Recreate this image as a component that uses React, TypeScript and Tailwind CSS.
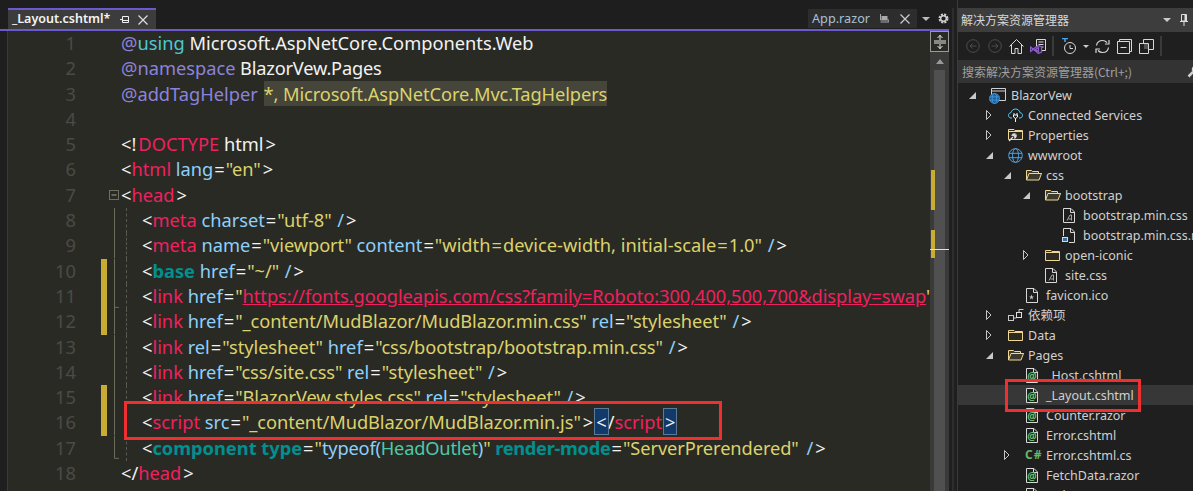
import type { ReactNode } from "react";

const pink = "text-[#f0205f]";
const blue = "text-[#8dd0fb]";
const yel = "text-[#dcd26c]";
const teal = "font-bold text-[#00908f]";
const wht = "text-[#f2f2f2]";
const pur = "text-[#8a83dc]";
const brace = "bg-[#113a6b] text-[#f2f2f2] outline outline-[#5a7a99] px-[1px]";

function C({ c, children }: { c: string; children: ReactNode }) {
  return <span className={c}>{children}</span>;
}

// the reference font draws =, > and /> wider than Noto Sans does
const Eq = () => <span className={`${wht} px-[1px]`}>=</span>;
const Gt = () => <span className={`${wht} pl-[2px]`}>&gt;</span>;
const Close = () => (
  <>
    <span className={`${blue} pl-[1px]`}> /</span>
    <Gt />
  </>
);
const Lt = ({ tag }: { tag: string }) => (
  <>
    <C c={wht}>&lt;</C>
    <C c={pink}>{tag}</C>
  </>
);
const Attr = ({ name }: { name: string }) => (
  <>
    <C c={blue}> {name}</C>
    <Eq />
  </>
);
const Str = ({ v }: { v: string }) => <span className={`${yel} tracking-[-0.08px]`}>{v}</span>;

type Fold = "box" | "line" | "end" | "tick";

const lines: { n: number; mark?: boolean; indent?: boolean; fold?: Fold; body: ReactNode }[] = [
  {
    n: 1,
    body: (
      <>
        <C c={pur}>@</C>
        <C c="text-[#4cc8d2]">using</C>
        <C c={wht}> Microsoft.AspNetCore.Components.Web</C>
      </>
    ),
  },
  {
    n: 2,
    body: (
      <>
        <C c={pur}>@namespace</C>
        <span className={`${wht} tracking-[-0.2px]`}> BlazorVew.Pages</span>
      </>
    ),
  },
  {
    n: 3,
    body: (
      <>
        <C c={pur}>@addTagHelper </C>
        <span className="bg-[#45453a] text-[#dcd26c] tracking-[-0.1px] ml-[1px]">*, Microsoft.AspNetCore.Mvc.TagHelpers</span>
      </>
    ),
  },
  { n: 4, body: <>&nbsp;</> },
  {
    n: 5,
    body: (
      <>
        <span className={`${wht} pr-[2px]`}>&lt;!</span>
        <C c={pink}>DOCTYPE</C>
        <C c={wht}> html</C>
        <Gt />
      </>
    ),
  },
  {
    n: 6,
    body: (
      <>
        <Lt tag="html" />
        <Attr name="lang" />
        <Str v={'"en"'} />
        <Gt />
      </>
    ),
  },
  {
    n: 7,
    fold: "box",
    body: (
      <>
        <Lt tag="head" />
        <Gt />
      </>
    ),
  },
  {
    n: 8,
    indent: true,
    fold: "line",
    body: (
      <>
        <Lt tag="meta" />
        <Attr name="charset" />
        <Str v={'"utf-8"'} />
        <Close />
      </>
    ),
  },
  {
    n: 9,
    indent: true,
    fold: "line",
    body: (
      <>
        <Lt tag="meta" />
        <Attr name="name" />
        <Str v={'"viewport"'} />
        <Attr name="content" />
        <C c={yel}>
          "width<span className="px-[1px]">=</span>device-width, initial-scale<span className="px-[1px]">=</span>1.0"
        </C>
        <Close />
      </>
    ),
  },
  {
    n: 10,
    mark: true,
    indent: true,
    fold: "line",
    body: (
      <>
        <C c={wht}>&lt;</C>
        <C c={teal}>base</C>
        <Attr name="href" />
        <Str v={'"~/"'} />
        <Close />
      </>
    ),
  },
  {
    n: 11,
    mark: true,
    indent: true,
    fold: "tick",
    body: (
      <>
        <Lt tag="link" />
        <Attr name="href" />
        <C c={yel}>"</C>
        <span className={`${pink} underline tracking-[-0.05px]`}>https://fonts.googleapis.com/css?family=Roboto:300,400,500,700&amp;display=swap</span>
        <C c={yel}>"</C>
      </>
    ),
  },
  {
    n: 12,
    mark: true,
    indent: true,
    fold: "line",
    body: (
      <>
        <Lt tag="link" />
        <Attr name="href" />
        <Str v={'"_content/MudBlazor/MudBlazor.min.css"'} />
        <Attr name="rel" />
        <Str v={'"stylesheet"'} />
        <Close />
      </>
    ),
  },
  {
    n: 13,
    indent: true,
    fold: "line",
    body: (
      <>
        <Lt tag="link" />
        <Attr name="rel" />
        <Str v={'"stylesheet"'} />
        <Attr name="href" />
        <Str v={'"css/bootstrap/bootstrap.min.css"'} />
        <Close />
      </>
    ),
  },
  {
    n: 14,
    indent: true,
    fold: "line",
    body: (
      <>
        <Lt tag="link" />
        <Attr name="href" />
        <Str v={'"css/site.css"'} />
        <Attr name="rel" />
        <Str v={'"stylesheet"'} />
        <Close />
      </>
    ),
  },
  {
    n: 15,
    mark: true,
    indent: true,
    fold: "line",
    body: (
      <>
        <Lt tag="link" />
        <Attr name="href" />
        <Str v={'"BlazorVew.styles.css"'} />
        <Attr name="rel" />
        <Str v={'"stylesheet"'} />
        <Close />
      </>
    ),
  },
  {
    n: 16,
    mark: true,
    indent: true,
    fold: "line",
    body: (
      <>
        <Lt tag="script" />
        <Attr name="src" />
        <Str v={'"_content/MudBlazor/MudBlazor.min.js"'} />
        <Gt />
        <span className={`${brace} ml-[2px]`}>&lt;</span>
        <C c={wht}>/</C>
        <C c={pink}>script</C>
        <span className={`${brace} ml-[2px]`}>&gt;</span>
      </>
    ),
  },
  {
    n: 17,
    indent: true,
    fold: "end",
    body: (
      <>
        <C c={wht}>&lt;</C>
        <C c={teal}>component type</C>
        <Eq />
        <C c={yel}>"</C>
        <span className={`${blue} tracking-[-0.2px]`}>typeof(</span>
        <span className="text-[#4ec9a8] tracking-[-0.2px]">HeadOutlet</span>
        <C c={blue}>)</C>
        <C c={yel}>"</C>
        <span className={`${teal} tracking-[-0.3px]`}> render-mode</span>
        <Eq />
        <Str v={'"ServerPrerendered"'} />
        <span className="pl-[2px]" />
        <Close />
      </>
    ),
  },
  {
    n: 18,
    body: (
      <>
        <C c={wht}>&lt;/</C>
        <C c={pink}>head</C>
        <Gt />
      </>
    ),
  },
];

function FoldCell({ fold }: { fold?: Fold }) {
  if (fold === "box") {
    return (
      <div className="w-[12px] h-full flex items-center">
        <svg width="10" height="10" viewBox="0 0 10 10">
          <rect x="0.5" y="0.5" width="9" height="9" fill="none" stroke="#6f6f60" />
          <path d="M2.5 5H7.5" stroke="#a0a090" />
        </svg>
      </div>
    );
  }
  if (!fold) return <div className="w-[12px] h-full" />;
  return (
    <svg width="12" height="26" viewBox="0 0 12 26" className="w-[12px] h-full">
      <path d={fold === "end" ? "M5.5 0V23" : "M5.5 0V26"} stroke="#6f6f60" />
      {fold === "end" && <path d="M5.5 23H10" stroke="#6f6f60" />}
      {fold === "tick" && <path d="M5.5 24H10" stroke="#6f6f60" />}
    </svg>
  );
}

function Editor() {
  return (
    <div className="relative flex-1 min-w-0 overflow-hidden bg-[#2a2a25] border-l border-[#3a3a3a] text-[18.25px] font-['Noto_Sans','Open_Sans',sans-serif]">
      {lines.map((l) => (
        <div key={l.n} className="flex h-[25.3px] leading-[23.5px] whitespace-pre">
          <div className="w-[69px] pr-[1px] text-right text-[#4b4b44] shrink-0">{l.n}</div>
          <div className="w-[24px] shrink-0" />
          <div className={`w-[6px] h-full shrink-0 ${l.mark ? "bg-[#c9ac34]" : ""}`} />
          <div className="ml-[2px] shrink-0">
            <FoldCell fold={l.fold} />
          </div>
          {l.indent ? (
            <div className="ml-[5px] pl-[15px] border-l border-dashed border-[#5a5a52]">{l.body}</div>
          ) : (
            <div>{l.body}</div>
          )}
        </div>
      ))}
    </div>
  );
}

function ScrollRail() {
  return (
    <div className="w-[19px] shrink-0 flex flex-col bg-[#3a3a38] items-center">
      <div className="w-full h-[21px] border border-[#9a9a9a] bg-[#2a2a25] flex items-center justify-center">
        <svg width="12" height="14" viewBox="0 0 12 14">
          <path d="M0 6H12M0 8H12M6 0V5M6 9V14M3.5 3L6 0.5 8.5 3M3.5 11L6 13.5 8.5 11" stroke="#e4e4e4" fill="none" />
        </svg>
      </div>
      <div className="h-[18px] flex items-center">
        <div className="w-0 h-0 border-x-[4.5px] border-x-transparent border-b-[5px] border-b-[#999]" />
      </div>
      <div className="relative w-[11px] flex-1 bg-[#505050]">
        <div className="absolute left-[-3px] top-[100px] w-[4px] h-[40px] bg-[#c9ac34]" />
        <div className="absolute left-[-3px] top-[160px] w-[4px] h-[28px] bg-[#c9ac34]" />
        <div className="absolute left-[-4px] top-[179px] w-[19px] h-[1px] bg-[#e0e0e0]" />
      </div>
    </div>
  );
}

function Tabs() {
  return (
    <div className="h-[31px] flex pt-[8px] pl-[8px] border-b-[2px] border-[#6a5acd] bg-[#1e1e1e] items-stretch shrink-0 font-['Noto_Sans',sans-serif]">
      <div className="w-[148px] border-t-[2px] border-[#6a5acd] bg-[#3c3c3c] flex items-center pl-[4px] text-[#f4f4f4] text-[12.5px] font-semibold">
        _Layout.cshtml*
        <svg width="9" height="9" viewBox="0 0 9 9" className="ml-auto shrink-0">
          <path d="M0 4.5H2.5M2.5 1.5H8.5V7.5H2.5ZM2.5 5.5H8.5" stroke="#f0f0f0" fill="none" />
        </svg>
        <svg width="10" height="10" viewBox="0 0 10 10" className="ml-[9px] mr-[8px] shrink-0">
          <path d="M0.5 0.5L9.5 9.5M9.5 0.5L0.5 9.5" stroke="#ddd" strokeWidth="1.2" />
        </svg>
      </div>
      <div className="flex-1" />
      <div className="w-[109px] mt-[1px] mb-[1px] bg-[#2d2d2d] flex items-center pl-[4px] text-[#a9c0d6] text-[12.7px]">
        App.razor
        <svg width="10" height="9" viewBox="0 0 10 9" className="ml-auto shrink-0">
          <path d="M1.5 0V6H10V8H1.5" stroke="#aaa" fill="none" />
          <rect x="2.5" y="2" width="6" height="4" fill="#aaa" />
        </svg>
        <svg width="10" height="10" viewBox="0 0 10 10" className="ml-[11px] mr-[7px] shrink-0">
          <path d="M0.5 0.5L9.5 9.5M9.5 0.5L0.5 9.5" stroke="#ccc" strokeWidth="1.2" />
        </svg>
      </div>
      <div className="w-[32px] flex items-center">
        <div className="ml-[5px] w-0 h-0 border-x-[4px] border-x-transparent border-t-[4px] border-t-[#bbb]" />
        <svg width="11" height="11" viewBox="0 0 11 11" className="ml-[8px]">
          <circle cx="5.5" cy="5.5" r="3.8" fill="none" stroke="#ccc" strokeWidth="2.4" strokeDasharray="2 1" />
          <circle cx="5.5" cy="5.5" r="2.8" fill="none" stroke="#ccc" strokeWidth="1.4" />
        </svg>
      </div>
    </div>
  );
}

function Tri({ open }: { open?: boolean }) {
  if (open) {
    return (
      <svg width="7" height="7" viewBox="0 0 7 7">
        <path d="M7 0V7H0Z" fill="#c8c8c8" />
      </svg>
    );
  }
  return (
    <svg width="6" height="10" viewBox="0 0 6 10">
      <path d="M0.5 0.5L5 5 0.5 9.5Z" fill="none" stroke="#c8c8c8" />
    </svg>
  );
}

function FolderIcon({ open }: { open?: boolean }) {
  return open ? (
    <svg width="16" height="12" viewBox="0 0 16 12">
      <path d="M0.5 11V1.5H5.5L6.5 2.5H12.5V4.5H15.5L13 11Z" fill="#3c3a2c" stroke="#f0d795" />
      <path d="M0.5 11L3 4.5H15.5" fill="none" stroke="#f0d795" />
    </svg>
  ) : (
    <svg width="15" height="11" viewBox="0 0 15 11">
      <path d="M0.5 10.5V0.5H6L7 1.5H14.5V10.5Z" fill="#2e2c22" stroke="#f0d795" />
      <path d="M0.5 2.5H14.5" stroke="#f0d795" />
    </svg>
  );
}

function PageShell({ children }: { children?: ReactNode }) {
  return (
    <svg width="12" height="15" viewBox="0 0 12 15">
      <path d="M0.5 0.5H8L11.5 4V14.5H0.5Z" fill="#1f1f1f" stroke="#d8d8d8" />
      <path d="M7.5 0.5V4.5H11.5" fill="none" stroke="#d8d8d8" />
      {children}
    </svg>
  );
}

function CssIcon() {
  return (
    <PageShell>
      <path d="M4 12.5L7 7H8.5V12.5M5.5 11H8.5" fill="none" stroke="#a8a8a8" />
    </PageShell>
  );
}

function RazorIcon() {
  return (
    <span className="relative block w-[12px] h-[15px]">
      <PageShell />
      <span className="absolute left-0 top-[2px] w-[12px] text-center text-[10.5px] leading-[13px] font-bold text-[#6bc070]">@</span>
    </span>
  );
}

const GlobeSvg = ({ size = 15, fill = "none" }: { size?: number; fill?: string }) => (
  <svg width={size} height={size} viewBox="0 0 15 15" fill={fill} stroke="#4aa3e8">
    <circle cx="7.5" cy="7.5" r="6.8" />
    <ellipse cx="7.5" cy="7.5" rx="3" ry="6.8" />
    <path d="M1 5.3H14M1 9.7H14" />
  </svg>
);

type TreeRow = { x: string; tri?: "open" | "closed"; icon: ReactNode; label: string; sel?: boolean };

const rows: TreeRow[] = [
  {
    x: "pl-[33px]",
    tri: "open",
    label: "BlazorVew",
    icon: (
      <span className="relative block w-[17px] h-[16px] -ml-[2px]">
        <svg width="15" height="13" viewBox="0 0 15 13" className="absolute left-[2px] top-[1px]">
          <path d="M0.5 12.5V0.5H14.5V12.5ZM0.5 3H14.5" fill="none" stroke="#d0d0d0" />
        </svg>
        <span className="absolute left-0 top-[6px] flex">
          <GlobeSvg size={11} fill="#1e5f9e" />
        </span>
      </span>
    ),
  },
  {
    x: "pl-[50px]",
    tri: "closed",
    label: "Connected Services",
    icon: (
      <svg width="15" height="14" viewBox="0 0 15 14" fill="none" stroke="#5ccbe8">
        <path d="M4 10H3C1.5 10 0.5 8.7 0.5 7.3 0.5 5.8 1.7 4.7 3 4.7 3.5 2.5 5.3 1 7.5 1 9.7 1 11.5 2.5 12 4.7 13.3 4.7 14.5 5.8 14.5 7.3 14.5 8.7 13.5 10 12 10H11" />
        <path d="M6 5V7M9 5V7M5.5 7H9.5V9L7.5 10.5 5.5 9ZM7.5 10.5V14" stroke="#e8f8ff" />
      </svg>
    ),
  },
  {
    x: "pl-[50px]",
    tri: "closed",
    label: "Properties",
    icon: (
      <span className="relative block w-[15px] h-[13px]">
        <FolderIcon />
        <svg width="9" height="9" viewBox="0 0 9 9" className="absolute left-0 top-[4px]">
          <path d="M1 8L5 4M4 3C4 1.5 5.5 0.5 7 1L5.5 2.5 6.5 3.5 8 2C8.5 3.5 7.5 5 6 5" stroke="#e0e0e0" fill="#1f1f1f" strokeWidth="1.2" />
        </svg>
      </span>
    ),
  },
  { x: "pl-[50px]", tri: "open", label: "wwwroot", icon: <GlobeSvg /> },
  { x: "pl-[68px]", tri: "open", label: "css", icon: <FolderIcon open /> },
  { x: "pl-[87px]", tri: "open", label: "bootstrap", icon: <FolderIcon open /> },
  { x: "pl-[105px]", label: "bootstrap.min.css", icon: <CssIcon /> },
  {
    x: "pl-[105px]",
    label: "bootstrap.min.css.map",
    icon: (
      <span className="relative block w-[14px] h-[15px] -ml-[2px] pl-[2px]">
        <PageShell />
        <span className="absolute left-0 bottom-0 w-[8px] h-[7px] bg-[#d8d8d8] border border-[#1f1f1f] flex">
          <span className="m-[1px] flex-1 bg-[#2f6ea8]" />
        </span>
      </span>
    ),
  },
  { x: "pl-[87px]", tri: "closed", label: "open-iconic", icon: <FolderIcon /> },
  { x: "pl-[87px]", label: "site.css", icon: <CssIcon /> },
  {
    x: "pl-[68px]",
    label: "favicon.ico",
    icon: (
      <PageShell>
        <path d="M5.5 6.5L6.2 8.5H8L6.5 9.5 7 11.5 5.5 10.3 4 11.5 4.5 9.5 3 8.5H4.8Z" fill="#c8c8c8" />
      </PageShell>
    ),
  },
  {
    x: "pl-[50px]",
    tri: "closed",
    label: "依赖项",
    icon: (
      <svg width="16" height="13" viewBox="0 0 16 13" fill="none" stroke="#c8c8c8">
        <rect x="0.5" y="6.5" width="5" height="5" />
        <rect x="8.5" y="3.5" width="5" height="5" stroke="#e0e0e0" />
        <path d="M5.5 9H8.5M11 3.5V0.5H15.5" />
      </svg>
    ),
  },
  { x: "pl-[50px]", tri: "closed", label: "Data", icon: <FolderIcon /> },
  { x: "pl-[50px]", tri: "open", label: "Pages", icon: <FolderIcon open /> },
  { x: "pl-[68px]", label: "_Host.cshtml", icon: <RazorIcon /> },
  { x: "pl-[68px]", label: "_Layout.cshtml", icon: <RazorIcon />, sel: true },
  { x: "pl-[68px]", label: "Counter.razor", icon: <RazorIcon /> },
  { x: "pl-[68px]", label: "Error.cshtml", icon: <RazorIcon /> },
  {
    x: "pl-[68px]",
    tri: "closed",
    label: "Error.cshtml.cs",
    icon: <span className="block text-[12px] font-bold tracking-[1px] text-[#67b56b] leading-none -ml-[1px]">C#</span>,
  },
  { x: "pl-[68px]", label: "FetchData.razor", icon: <RazorIcon /> },
  { x: "pl-[68px]", label: "Index.razor", icon: <RazorIcon /> },
];

function Row({ r }: { r: TreeRow }) {
  return (
    <div className={`relative flex items-center h-[20px] shrink-0 ${r.x} ${r.sel ? "bg-[#373737]" : ""}`}>
      {r.tri && (
        <span className="absolute top-[5px] -ml-[22px] w-[10px] h-[10px] flex items-center">
          <Tri open={r.tri === "open"} />
        </span>
      )}
      <span className="w-[20px] shrink-0 flex items-center">{r.icon}</span>
      <span className="pt-[2px] text-[12.5px] text-[#d0d0d0] whitespace-nowrap font-['Noto_Sans','Noto_Sans_CJK_SC',sans-serif]">{r.label}</span>
    </div>
  );
}

function Solution() {
  return (
    <div className="w-[236px] shrink-0 flex flex-col overflow-hidden border-l border-[#3a3a3a] font-['Noto_Sans','Noto_Sans_CJK_SC',sans-serif]">
      <div className="mt-[8px] h-[24px] bg-[#3d3d3d] flex items-center pl-[3px] text-[12px] text-[#d8d8d8] shrink-0">
        <span className="font-['Noto_Sans_CJK_SC',sans-serif]">解决方案资源管理器</span>
        <div className="ml-auto mr-[5px] flex items-center gap-[9px]">
          <div className="w-0 h-0 border-x-[4px] border-x-transparent border-t-[4px] border-t-[#ccc]" />
          <svg width="8" height="12" viewBox="0 0 8 12">
            <path d="M1.5 0.5H6.5V7H1.5ZM0 7.5H8M4 8V12" stroke="#ddd" fill="none" />
            <rect x="4.5" y="1" width="2" height="6" fill="#ddd" />
          </svg>
        </div>
      </div>
      <div className="h-[28px] flex items-center pl-[8px] shrink-0 bg-[#1f1f1f]">
        <svg width="14" height="14" viewBox="0 0 14 14" fill="none" stroke="#4c4c4c">
          <circle cx="7" cy="7" r="6.3" />
          <path d="M10.5 7H4M6.5 4.5L4 7 6.5 9.5" />
        </svg>
        <svg width="14" height="14" viewBox="0 0 14 14" fill="none" stroke="#4c4c4c" className="ml-[8px]">
          <circle cx="7" cy="7" r="6.3" />
          <path d="M3.5 7H10M7.5 4.5L10 7 7.5 9.5" />
        </svg>
        <svg width="15" height="15" viewBox="0 0 15 15" fill="none" stroke="#d8d8d8" className="ml-[7px]">
          <path d="M0.5 7.5L7.5 0.5 14.5 7.5M2.5 6V14.5H6V9.5H9V14.5H12.5V6" />
        </svg>
        <svg width="16" height="15" viewBox="0 0 16 15" fill="none" className="ml-[6px]">
          <path d="M6.5 0.5H15.5V11.5H6.5Z" stroke="#d8d8d8" fill="#1f1f1f" />
          <path d="M8.5 3H13.5M8.5 5.5H13.5M8.5 8H13.5" stroke="#d8d8d8" />
          <path d="M0.5 8V12.5L2.5 11V9.5ZM2.5 10.5L8.5 6.5 11.5 8V13L8.5 14.5 2.5 9.5M8.5 8.5V12.5L5.5 10.5Z" stroke="#8a5cc8" strokeWidth="1.3" fill="#1f1f1f" />
        </svg>
        <div className="ml-[6px] w-[2px] h-[20px] bg-[#3a3a3a]" />
        <svg width="16" height="17" viewBox="0 0 16 17" fill="none" className="ml-[8px]">
          <path d="M0 0.5H6M3 0.5V4" stroke="#4aa3e8" strokeWidth="1.6" />
          <circle cx="8" cy="10" r="5.5" stroke="#d8d8d8" />
          <path d="M8 7V10.5H11" stroke="#d8d8d8" />
        </svg>
        <div className="ml-[5px] w-0 h-0 border-x-[3px] border-x-transparent border-t-[3px] border-t-[#ccc]" />
        <svg width="15" height="15" viewBox="0 0 15 15" fill="none" stroke="#d8d8d8" strokeWidth="1.2" className="ml-[6px]">
          <path d="M1.5 6.5C2 3.5 4.5 1.5 7.5 1.5 9.5 1.5 11 2.5 12 3.5M14 1V5H10M13.5 8.5C13 11.5 10.5 13.5 7.5 13.5 5.5 13.5 4 12.5 3 11.5M1 14V10H5" />
        </svg>
        <svg width="15" height="15" viewBox="0 0 15 15" fill="none" stroke="#d8d8d8" className="ml-[7px]">
          <path d="M0.5 2.5H12.5V14.5H0.5ZM2.5 2.5V0.5H14.5V12.5H12.5M3.5 8.5H9.5" />
        </svg>
        <svg width="15" height="15" viewBox="0 0 15 15" fill="none" stroke="#d8d8d8" className="ml-[7px]">
          <path d="M0.5 4.5H9.5V14.5H0.5ZM4.5 4.5V0.5H14.5V10.5H9.5" />
          <rect x="5" y="5" width="4" height="5" fill="#555" stroke="none" />
        </svg>
        <div className="ml-[6px] w-[2px] h-[20px] bg-[#3a3a3a]" />
      </div>
      <div className="h-[23px] bg-[#333333] flex items-center pl-[4px] text-[12px] text-[#a0a0a0] shrink-0">
        <span className="font-['Noto_Sans_CJK_SC',sans-serif]">搜索解决方案资源管理器(Ctrl+;)</span>
        <svg width="13" height="13" viewBox="0 0 13 13" fill="none" stroke="#d0d0d0" strokeWidth="1.5" className="ml-auto -mr-[7px] shrink-0">
          <circle cx="8.5" cy="4.5" r="3" />
          <path d="M6 7L1.5 11.5" strokeWidth="2.5" />
        </svg>
      </div>
      <div className="flex-1 flex flex-col pt-[2px] bg-[#1f1f1f] overflow-hidden">
        {rows.map((r) => (
          <Row key={r.label} r={r} />
        ))}
      </div>
    </div>
  );
}

export default function App() {
  return (
    <div className="relative w-[1193px] h-[491px] flex overflow-hidden bg-[#1f1f1f]">
      <div className="w-[949px] shrink-0 flex flex-col">
        <Tabs />
        <div className="flex-1 flex min-h-0 pl-[7px]">
          <Editor />
          <ScrollRail />
        </div>
      </div>
      <div className="w-[8px] shrink-0 flex justify-center pt-[8px]">
        <div className="w-[2px] h-full bg-[#2d2d2d]" />
      </div>
      <Solution />
      <div className="absolute left-[124px] top-[401px] w-[598px] h-[39px] border-[3px] border-[#f03030] pointer-events-none" />
      <div className="absolute left-[1005px] top-[379px] w-[136px] h-[33px] border-[3px] border-[#f03030] pointer-events-none" />
    </div>
  );
}
